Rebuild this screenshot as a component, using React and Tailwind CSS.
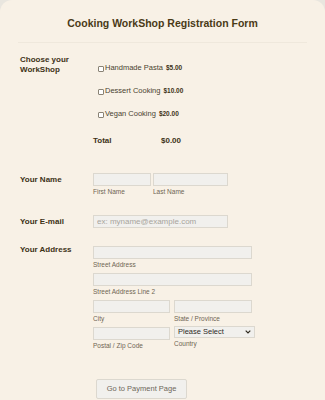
import React from 'react';

const Field = ({ width, label, placeholder }) => (
  <div className="flex flex-col">
    <input
      placeholder={placeholder}
      className={`${width} h-[13px] bg-[#f1f0ed] border border-[#dcd8cf] text-[8px] px-[3px] placeholder:text-[#a8a49c] outline-none`}
    />
    {label && <span className="text-[6.5px] text-[#6f6553] mt-[2px] leading-[8px]">{label}</span>}
  </div>
);

const App = () => {
  const workshops = [
    { name: 'Handmade Pasta', price: '$5.00' },
    { name: 'Dessert Cooking', price: '$10.00' },
    { name: 'Vegan Cooking', price: '$20.00' },
  ];

  return (
    <div className="w-[325px] h-[400px] overflow-hidden bg-[#e9e6df] font-['Liberation_Sans',Arial,sans-serif]">
      <div className="w-[325px] h-[420px] bg-[#f8f1e6] rounded-[12px]">
        <h1 className="pt-[16px] text-center text-[10.5px] font-bold text-[#4a3a17] leading-[14px]">
          Cooking WorkShop Registration Form
        </h1>
        <div className="mx-[18px] mt-[12px] h-px bg-[#efe8dc]" />

        {/* workshop */}
        <div className="flex mt-[12px] pl-[20px]">
          <div className="w-[73px] text-[8px] font-bold text-[#3d3216] leading-[10px]">
            Choose your WorkShop
          </div>
          <div className="flex flex-col gap-[11px] pt-[7px] pl-[5px]">
            {workshops.map((w) => (
              <label key={w.name} className="flex items-center text-[7.5px] text-[#4a4230] leading-[12px]">
                <span className="w-[6px] h-[6px] border border-[#8a8375] rounded-[1px] bg-white mr-[1px] mt-[2px]" />
                {w.name}
                <span className="font-bold text-[6.5px] ml-[3px] text-[#3d3216]">{w.price}</span>
              </label>
            ))}
          </div>
        </div>
        <div className="flex pl-[93px] mt-[15px] text-[8px] font-bold text-[#3d3216]">
          <span className="w-[68px]">Total</span>
          <span>$0.00</span>
        </div>

        {/* name */}
        <div className="flex mt-[26px] pl-[20px]">
          <div className="w-[73px] pt-[1px] text-[8px] font-bold text-[#3d3216]">Your Name</div>
          <div className="flex gap-[2px]">
            <Field width="w-[58px]" label="First Name" />
            <Field width="w-[75px]" label="Last Name" />
          </div>
        </div>

        {/* email */}
        <div className="flex mt-[19px] pl-[20px] items-center">
          <div className="w-[73px] text-[8px] font-bold text-[#3d3216]">Your E-mail</div>
          <Field width="w-[135px]" placeholder="ex: myname@example.com" />
        </div>

        {/* address */}
        <div className="flex mt-[15px] pl-[20px]">
          <div className="w-[73px] pt-[1px] text-[8px] font-bold text-[#3d3216]">Your Address</div>
          <div className="flex flex-col gap-[4px] mt-[3px]">
            <Field width="w-[159px]" label="Street Address" />
            <Field width="w-[159px]" label="Street Address Line 2" />
            <div className="flex gap-[4px]">
              <Field width="w-[77px]" label="City" />
              <Field width="w-[78px]" label="State / Province" />
            </div>
            <div className="flex gap-[4px]">
              <Field width="w-[77px]" label="Postal / Zip Code" />
              <div className="flex flex-col -mt-[1px]">
                <div className="w-[81px] h-[12px] bg-[#f1f0ed] border border-[#dcd8cf] flex items-center justify-between px-[3px] text-[7.5px] text-[#2f2a1f]">
                  <span>Please Select</span>
                  <svg width="6" height="4" viewBox="0 0 6 4"><path d="M0.7 0.7 L3 3 L5.3 0.7" stroke="#2f2a1f" strokeWidth="1.2" fill="none" /></svg>
                </div>
                <span className="text-[6.5px] text-[#6f6553] mt-[2px] leading-[8px]">Country</span>
              </div>
            </div>
          </div>
        </div>

        <div className="pl-[96px] mt-[24px]">
          <button className="w-[91px] h-[20px] bg-[#f1f0ed] border border-[#dcd8cf] rounded-[2px] text-[7.5px] text-[#6e675a]">
            Go to Payment Page
          </button>
        </div>
      </div>
    </div>
  );
};

export default App;
